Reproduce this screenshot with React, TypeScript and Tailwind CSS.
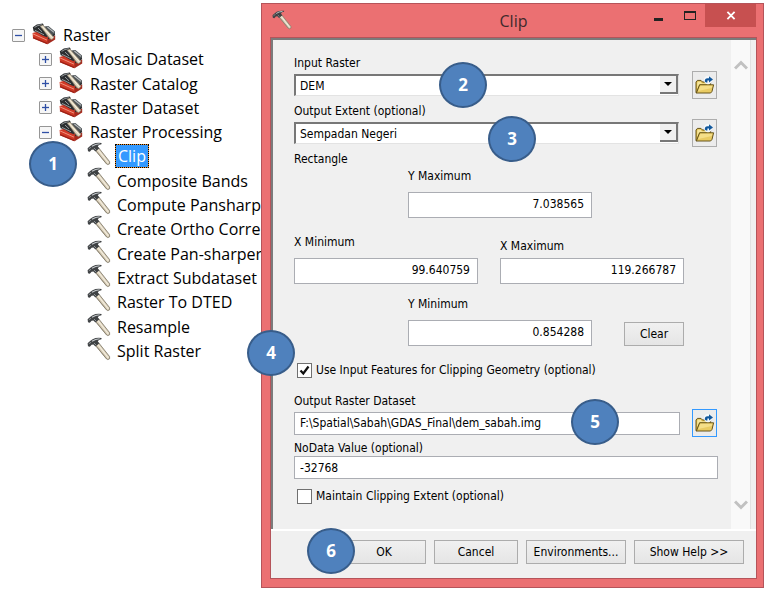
import React, { useState } from 'react';

interface TreeItem {
    label: string;
    level: 0 | 1 | 2;
    open?: boolean;
}

const TREE: TreeItem[] = [
    { label: 'Raster', level: 0, open: true },
    { label: 'Mosaic Dataset', level: 1 },
    { label: 'Raster Catalog', level: 1 },
    { label: 'Raster Dataset', level: 1 },
    { label: 'Raster Processing', level: 1, open: true },
    { label: 'Clip', level: 2 },
    { label: 'Composite Bands', level: 2 },
    { label: 'Compute Pansharp', level: 2 },
    { label: 'Create Ortho Corre', level: 2 },
    { label: 'Create Pan-sharper', level: 2 },
    { label: 'Extract Subdataset', level: 2 },
    { label: 'Raster To DTED', level: 2 },
    { label: 'Resample', level: 2 },
    { label: 'Split Raster', level: 2 },
];

const INDENT = ['pl-3', 'pl-[39px]', 'pl-[87px]'];

const HammerIcon: React.FC<{ className?: string }> = ({ className }) => (
    <svg viewBox="0 0 24 24" className={className} aria-hidden="true">
        <path d="M8.5 8.5 11.8 6 22.6 19.6Q23.5 22.4 20.8 22.6L19.4 21.8Z" fill="#d8ceb8" stroke="#7a7262" strokeWidth=".8" />
        <path d="M11 7.6 21.4 21" stroke="#f5eedf" strokeWidth="1.2" />
        <path d="M9.3 9.2 19.8 22" stroke="#8d8471" strokeWidth=".7" />
        <path d="M.6 6.2 3.4 3.8 5.6 2.2Q9.5 .2 14.6 1L14.4 2.2Q11.2 2.4 10.8 4.4L12.4 6.2 8.4 9.6 6.4 7.4 4.6 7.8 2.8 9.8 1 9.2Z" fill="#3f4244" />
        <path d="M5 4.2Q8.5 1.8 12.6 1.7" stroke="#c4c8cb" strokeWidth="1.1" fill="none" />
        <path d="m1.8 6.8 2.4-1.6M7 6l2 2" stroke="#8e9396" strokeWidth="1" />
    </svg>
);

const ToolboxIcon: React.FC = () => (
    <svg viewBox="0 0 24 22" className="mb-[2px] h-[22px] w-6 shrink-0" aria-hidden="true">
        <path d="M12 3.6 16.4 3 23 8.6V12L16 16.6 4 10Z" fill="#4d5356" />
        <path d="m15.4 4 6.6 5.4" stroke="#b9bdbf" strokeWidth="1.2" />
        <path d="M.6 10 6 8.6 17 14.2 15.6 21.2 1 15.2Z" fill="#d03a27" />
        <path d="m.8 10.8 14.4 6.4" stroke="#f2917c" strokeWidth="1" />
        <path d="m1 14.6 14.4 6" stroke="#9c2116" strokeWidth="1.2" />
        <path d="M15.4 16.6 23.2 12.4V16.6L15.6 21.2Z" fill="#a52a1e" />
        <path d="m16 15.6 6.8-4.2" stroke="#2b2d2e" strokeWidth="1.6" />
        <path d="M.8 4.2 4.8 1.4 10.8.6 12 2.6 8.2 3.4 13.4 9.4 15.4 14.6 10.5 12.6 5.5 9.4 1.6 8.2Z" fill="#2b2e30" />
        <path d="M2.6 4.4Q5.6 2 9.8 1.7M3 7.4l9 4.4M6 5l4 3.8" stroke="#a2a6a8" strokeWidth=".9" fill="none" />
        <path d="M8.4 3.2 10.8 2 22 14.6 19.8 16.8 18 15.8Z" fill="#ddd2bb" stroke="#80745e" strokeWidth=".6" />
        <path d="m10.4 3.6 10 11.2" stroke="#fff8e7" strokeWidth=".9" />
    </svg>
);

const FolderIcon: React.FC = () => (
    <svg viewBox="0 0 20 18" className="h-[18px] w-5" aria-hidden="true">
        <path d="M1 16.8V6L2.4 4.4H6L7.6 6H15.6V9H5L1.6 17Z" fill="#ddb945" stroke="#66541c" strokeWidth="1" />
        <path d="M2.2 13V6.6L3 5.6H5.6L7 7.2H14.4V8.2H4.4Z" fill="#f6e69c" />
        <path d="M1.4 17 4.6 8.8H18.6L17 15.4 15.6 17Z" fill="#e9cb62" stroke="#66541c" strokeWidth="1" />
        <path d="M3.2 15 5.4 9.8H17.4L16.8 12Z" fill="#f5df88" />
        <circle cx="13" cy="4" r="4.2" fill="#f4f8fb" />
        <path d="M9.8 5.6Q9.6 2.2 12.6 2.2H14V.2L18 3.4 14 6.6V4.6H12.4V6.4H11Z" fill="#12589c" />
    </svg>
);

const Toggle: React.FC<{ open?: boolean }> = ({ open }) => (
    <button
        aria-label={open ? 'Collapse' : 'Expand'}
        className="mr-[7px] flex h-[13px] w-[13px] shrink-0 items-center justify-center rounded-[1px] border border-[#969696] bg-[#f6f6f6]"
    >
        <svg viewBox="0 0 9 9" className="h-[9px] w-[9px]" stroke="#2f4fa5" strokeWidth="1.3">
            <path d="M1 4.5h7" />
            {!open && <path d="M4.5 1v7" />}
        </svg>
    </button>
);

const Badge: React.FC<{ n: number; className: string }> = ({ n, className }) => (
    <span
        className={`absolute z-10 flex h-[46px] w-12 items-center justify-center rounded-[50%] border-2 border-[#385d8a] bg-[#4f81bd] font-['Open_Sans',sans-serif] text-[17px] font-bold text-white ${className}`}
    >
        {n}
    </span>
);

const BrowseButton: React.FC<{ active?: boolean }> = ({ active }) => (
    <button
        aria-label="Browse"
        className={`mr-px flex h-7 w-[25px] shrink-0 items-center justify-center border bg-[#ececec] ${active ? 'border-[#3399ff]' : 'border-[#adadad]'}`}
    >
        <FolderIcon />
    </button>
);

const ComboField: React.FC<{ id: string; label: string; value: string; children: React.ReactNode }> = ({ id, label, value, children }) => (
    <div className="relative mb-1">
        <label htmlFor={id} className="block h-4">{label}</label>
        <div className="flex items-center gap-[13px]">
            <div className="relative h-[22px] flex-1">
                <select id={id} className="h-full w-full appearance-none border-t-2 border-l-2 border-r border-b border-t-[#777] border-l-[#777] border-r-[#e3e3e3] border-b-[#e3e3e3] bg-white pl-1">
                    <option>{value}</option>
                </select>
                <span className="pointer-events-none absolute top-[2px] right-px flex h-[18px] w-[18px] items-center justify-center border-r-2 border-b-2 border-[#777] bg-[#f0f0f0]">
                    <svg viewBox="0 0 8 4" className="h-1 w-2"><path d="M0 0h8L4 4z" /></svg>
                </span>
            </div>
            <BrowseButton />
        </div>
        {children}
    </div>
);

const CoordField: React.FC<{ id: string; label: string; value: string; tight?: boolean }> = ({ id, label, value, tight }) => (
    <div className={`flex w-[184px] flex-col ${tight ? 'gap-1' : 'gap-2'}`}>
        <label htmlFor={id} className="h-4">{label}</label>
        <input id={id} defaultValue={value} className="h-[26px] w-full border border-[#abadb3] bg-white pr-[7px] pb-[3px] text-right" />
    </div>
);

const CheckField: React.FC<{ label: string; initial: boolean }> = ({ label, initial }) => {
    const [checked, setChecked] = useState(initial);

    return (
        <label className="ml-[3px] flex h-4 items-center gap-1">
            <span className="relative h-[15px] w-[15px]">
                <input
                    type="checkbox"
                    checked={checked}
                    onChange={e => setChecked(e.target.checked)}
                    className="block h-[15px] w-[15px] appearance-none border border-[#707070] bg-white"
                />
                {checked && (
                    <svg viewBox="0 0 15 15" className="pointer-events-none absolute inset-0" fill="none" stroke="#111" strokeWidth="2.2">
                        <path d="m3.5 7.5 2.8 3 5.2-7" />
                    </svg>
                )}
            </span>
            {label}
        </label>
    );
};

const PushButton: React.FC<{ className: string; children: React.ReactNode }> = ({ className, children }) => (
    <button className={`h-6 border border-[#acacac] bg-linear-to-b from-[#f0f0f0] to-[#e5e5e5] whitespace-nowrap ${className}`}>
        {children}
    </button>
);

const ToolTree: React.FC = () => (
    <nav className="relative w-[261px] shrink-0 pt-[23px] font-['Open_Sans',sans-serif] text-base leading-6 text-black">
        <ul className="flex h-[340px] flex-col justify-between">
            {TREE.map(item => (
                <li key={item.label} className={`flex h-6 items-center whitespace-nowrap ${INDENT[item.level]}`}>
                    {item.level < 2 ? (
                        <>
                            <Toggle open={item.open} />
                            <ToolboxIcon />
                        </>
                    ) : (
                        <HammerIcon className="mb-1 h-6 w-6 shrink-0" />
                    )}
                    {item.label === 'Clip' ? (
                        <span className="ml-1 border border-dotted border-black bg-[#f0902a]">
                            <span className="block bg-[#3399ff] px-[2px] leading-[22px] text-white">{item.label}</span>
                        </span>
                    ) : (
                        <span className={item.level < 2 ? 'ml-[7px]' : 'ml-[6px]'}>{item.label}</span>
                    )}
                </li>
            ))}
        </ul>
        <Badge n={1} className="top-[141px] left-[29px]" />
    </nav>
);

const App: React.FC = () => {
    return (
        <div className="flex items-start bg-white">
            <ToolTree />

            <section className="relative mt-[3px] mr-[9px] flex-1 border border-[#b5545a] bg-[#eb7072] pr-[6px] pb-2 pl-2 font-['DejaVu_Sans_Condensed','DejaVu_Sans',sans-serif] text-xs leading-4 text-black">
                <header className="relative flex h-[33px] items-center justify-center">
                    <HammerIcon className="absolute top-[6px] left-[2px] h-5 w-5" />
                    <h1 className="font-['Open_Sans',sans-serif] text-base text-[#3f2a2c]">Clip</h1>
                    <div className="absolute top-0 right-px flex h-[23px]">
                        <button aria-label="Minimize" className="flex w-[31px] items-center justify-center">
                            <span className="mt-[7px] h-[3px] w-[9px] bg-[#222]" />
                        </button>
                        <button aria-label="Maximize" className="flex w-[31px] items-center justify-center">
                            <span className="h-[9px] w-3 border border-t-2 border-[#222]" />
                        </button>
                        <button aria-label="Close" className="flex w-[51px] items-center justify-center bg-[#c75050]">
                            <svg viewBox="0 0 10 10" className="h-[9px] w-[10px]" stroke="#fff" strokeWidth="2"><path d="m1 1 8 8M9 1 1 9" /></svg>
                        </button>
                    </div>
                </header>

                <div className="border border-[#b5545a] bg-[#f0f0f0]">
                    <div className="flex h-[491px] border-t-2 border-l-2 border-[#7b7b7b]">
                        <form className="flex-1 pt-[15px] pr-[13px] pl-[21px]">
                            <ComboField id="input-raster" label="Input Raster" value="DEM">
                                <Badge n={2} className="top-[7px] left-[145px]" />
                            </ComboField>
                            <ComboField id="output-extent" label="Output Extent (optional)" value="Sempadan Negeri">
                                <Badge n={3} className="top-[13px] left-[194px]" />
                            </ComboField>

                            <fieldset className="pt-px">
                                <legend className="h-4">Rectangle</legend>
                                <div className="ml-[114px]">
                                    <CoordField id="y-max" label="Y Maximum" value="7.038565" />
                                </div>
                                <div className="mt-4 flex items-end gap-[22px]">
                                    <CoordField id="x-min" label="X Minimum" value="99.640759" />
                                    <CoordField id="x-max" label="X Maximum" value="119.266787" tight />
                                </div>
                                <div className="mt-3 ml-[114px] flex items-end gap-8">
                                    <CoordField id="y-min" label="Y Minimum" value="0.854288" />
                                    <PushButton className="w-[60px]">Clear</PushButton>
                                </div>
                            </fieldset>

                            <div className="relative mt-4 mb-[15px]">
                                <CheckField label="Use Input Features for Clipping Geometry (optional)" initial />
                                <Badge n={4} className="-top-8 -left-[47px]" />
                            </div>

                            <div className="relative">
                                <label htmlFor="output-raster" className="block h-4">Output Raster Dataset</label>
                                <div className="flex items-center gap-3">
                                    <input id="output-raster" defaultValue="F:\Spatial\Sabah\GDAS_Final\dem_sabah.img" className="h-[23px] min-w-0 flex-1 border border-[#abadb3] bg-white pl-[5px]" />
                                    <BrowseButton active />
                                </div>
                                <Badge n={5} className="top-[6px] left-[277px]" />
                            </div>

                            <label htmlFor="nodata" className="mt-[3px] block h-4">NoData Value (optional)</label>
                            <input id="nodata" defaultValue="-32768" className="mb-[9px] block h-[23px] w-full border border-[#abadb3] bg-white pl-[5px]" />
                            <CheckField label="Maintain Clipping Extent (optional)" initial={false} />
                        </form>

                        <div className="mr-[5px] flex w-5 flex-col items-center justify-between border-r border-[#e2e2e2] bg-[#f9f9f9] pt-5 pb-[19px]">
                            <svg viewBox="0 0 14 10" className="h-[10px] w-[14px]" fill="none" stroke="#c1c1c1" strokeWidth="3"><path d="m1 8.5 6-6 6 6" /></svg>
                            <svg viewBox="0 0 14 10" className="h-[10px] w-[14px]" fill="none" stroke="#c1c1c1" strokeWidth="3"><path d="m1 1.5 6 6 6-6" /></svg>
                        </div>
                    </div>

                    <footer className="relative flex justify-end gap-2 border-t-2 border-white pt-[9px] pr-3 pb-[14px]">
                        <PushButton className="w-[84px]">OK</PushButton>
                        <PushButton className="w-[84px]">Cancel</PushButton>
                        <PushButton className="w-[100px]">Environments...</PushButton>
                        <PushButton className="w-[110px]">Show Help &gt;&gt;</PushButton>
                        <Badge n={6} className="-top-[3px] left-9" />
                    </footer>
                </div>
            </section>
        </div>
    );
};

export default App;
